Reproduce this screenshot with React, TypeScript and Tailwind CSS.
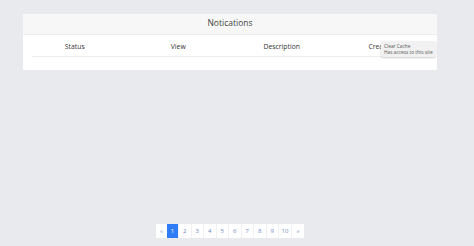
import React from "react";

// Column headers of the notification table
const columns = ["Status", "View", "Description", "Created At"];

const pages = [1, 2, 3, 4, 5, 6, 7, 8, 9, 10];

export default function App() {
  return (
    <div className="flex h-[246px] w-[474px] bg-[#e9eaee] font-['Open_Sans',sans-serif]">
      <div className="flex w-[460px] flex-col">
        {/* Card */}
        <div className="mx-[23px] mt-[14px] bg-white">
          <div className="flex h-[21px] items-center justify-center border-b border-[#ececec] bg-[#f7f7f7] pb-[1px] text-[8.5px] text-[#444]">
            Notications
          </div>
          <div className="relative pb-[13px]">
            <div className="grid h-[21px] grid-cols-4 items-center pt-[4px] text-[6.8px] text-[#333]">
              {columns.map((c) => (
                <div key={c} className="text-center">
                  {c}
                </div>
              ))}
            </div>
            <div className="mx-[9px] border-b border-[#ededed]" />

            {/* Extension tooltip */}
            <div className="absolute left-[358px] top-[6px] w-[55px] rounded-[2px] bg-[#f1f1f1] px-[3px] py-[2px] text-[4.8px] leading-[6px] text-[#555] shadow-[0_1px_2px_rgba(0,0,0,0.2)]">
              <div>Clear Cache</div>
              <div>Has access to this site</div>
            </div>
          </div>
        </div>

        {/* Pagination */}
        <div className="mt-auto mb-[8px] flex justify-center">
          <div className="flex h-[14px] bg-white text-[6px] text-[#6a8bc4]">
            <span className="flex w-[11px] items-center justify-center">«</span>
            {pages.map((p) => (
              <span
                key={p}
                className={
                  p === 1
                    ? "flex w-[11px] items-center justify-center bg-[#2f7cf6] text-white"
                    : "flex min-w-[12.5px] items-center justify-center border-l border-[#f0f0f0] px-[2.5px]"
                }
              >
                {p}
              </span>
            ))}
            <span className="flex w-[13px] items-center justify-center border-l border-[#f0f0f0]">»</span>
          </div>
        </div>
      </div>
    </div>
  );
}
